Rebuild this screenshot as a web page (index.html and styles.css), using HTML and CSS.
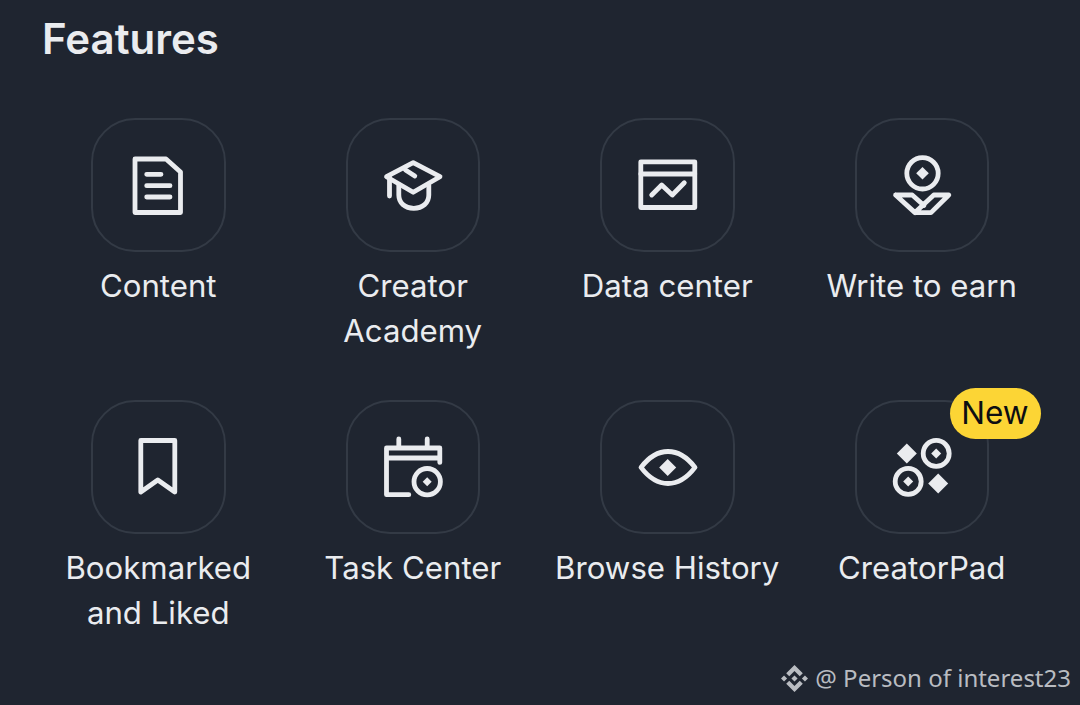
FILE: index.html
```html
<!DOCTYPE html>
<html lang="en">
<head>
    <meta charset="UTF-8">
    <meta name="viewport" content="width=device-width, initial-scale=1.0">
    <title>Features</title>
    <link rel="stylesheet" href="styles.css">
</head>
<body>

<h1 class="title">Features</h1>

<div class="features">

    <div class="feature">
        <div class="tile">
            <svg class="icon" viewBox="0 0 64 64">
                <path d="M9 6H40L54.5 19V59.5H9Z"/>
                <path d="M20.7 21.3H35M20.7 32.7H44M20.7 44H44"/>
            </svg>
        </div>
        <p class="label">Content</p>
    </div>

    <div class="feature">
        <div class="tile">
            <svg class="icon" viewBox="0 0 64 64">
                <path d="M5.5 23.7L32.2 9.7L59 23.7L32.2 39.3Z"/>
                <path d="M8.5 23.7V43M17.8 32V42C17.8 50 24 55.3 32.8 55.3C41.5 55.3 47.8 50 47.8 42V32M24.5 17L33.8 23"/>
            </svg>
        </div>
        <p class="label">Creator Academy</p>
    </div>

    <div class="feature">
        <div class="tile">
            <svg class="icon" viewBox="0 0 64 64">
                <path d="M5.8 8.8H59.8V54.5H5.8Z"/>
                <path d="M5.8 21H59.8M16.7 42L26.7 32L37.3 42L49.3 29.7"/>
            </svg>
        </div>
        <p class="label">Data center</p>
    </div>

    <div class="feature">
        <div class="tile">
            <svg class="icon" viewBox="0 0 64 64">
                <circle cx="32.5" cy="20.3" r="15.7"/>
                <path class="solid" d="M32.5 14L38.8 20.3L32.5 26.6L26.2 20.3Z"/>
                <path d="M5.6 42H22.2L34 52.5M5.6 42L25 59.6M58.8 42H43.8L25 59.6H41Z"/>
            </svg>
        </div>
        <p class="label">Write to earn</p>
    </div>

    <div class="feature">
        <div class="tile">
            <svg class="icon" viewBox="0 0 64 64">
                <path d="M14.8 5.5H48.8V57L31.8 45L14.8 57Z"/>
            </svg>
        </div>
        <p class="label">Bookmarked and Liked</p>
    </div>

    <div class="feature">
        <div class="tile">
            <svg class="icon" viewBox="0 0 64 64">
                <path d="M58.8 27.4V13H5.5V59.7H27.8M5.5 23H58.8M17.8 4V13M46.2 4V13"/>
                <circle cx="46.2" cy="46.7" r="13.2"/>
                <path class="solid" d="M46.2 42.2L50.7 46.7L46.2 51.2L41.7 46.7Z"/>
            </svg>
        </div>
        <p class="label">Task Center</p>
    </div>

    <div class="feature">
        <div class="tile">
            <svg class="icon" viewBox="0 0 64 64">
                <path d="M6 32.4C14 22 22 16.5 33 16.5S52 22 60 32.4C52 43 44 48.5 33 48.5S14 43 6 32.4Z"/>
                <path class="solid" d="M32.7 23.9L41.2 32.4L32.7 40.9L24.2 32.4Z"/>
            </svg>
        </div>
        <p class="label">Browse History</p>
    </div>

    <div class="feature">
        <div class="tile">
            <svg class="icon" viewBox="0 0 64 64">
                <path class="solid" d="M16.8 8.4L26.8 18.4L16.8 28.4L6.8 18.4Z"/>
                <circle cx="46.2" cy="18.4" r="13"/>
                <path class="solid" d="M46.2 13.4L51.2 18.4L46.2 23.4L41.2 18.4Z"/>
                <circle cx="18.2" cy="46.4" r="13"/>
                <path class="solid" d="M18.2 41.4L23.2 46.4L18.2 51.4L13.2 46.4Z"/>
                <path class="solid" d="M48.2 38.4L58.2 48.4L48.2 58.4L38.2 48.4Z"/>
            </svg>
            <span class="badge">New</span>
        </div>
        <p class="label">CreatorPad</p>
    </div>

</div>

<!-- Watermark -->
<div class="watermark">
    <svg class="watermark-logo" viewBox="0 0 126.61 126.61">
        <path d="M38.73 53.2l24.59-24.58 24.6 24.6 14.3-14.31L63.32 0 24.42 38.9zM0 63.31l14.3-14.31 14.31 14.31L14.3 77.61zM38.73 73.41l24.59 24.59 24.6-24.6 14.31 14.29-38.9 38.91-38.91-38.88v-.03zM98 63.31l14.3-14.3 14.31 14.3-14.31 14.3zM77.83 63.3L63.32 48.78 48.81 63.28l14.51 14.5z"/>
    </svg>
    <span>@ Person of interest23</span>
</div>

</body>
</html>
```

FILE: styles.css
```css
body {
    font-family: Inter, 'Noto Sans', sans-serif;
    margin: 0;
    height: 705px;
    overflow: hidden;
    position: relative;
    background-color: #1f2530;
    color: #eaecef;
}
.title {
    margin: 0;
    padding: 15px 42px 0;
    font-size: 42px;
    line-height: 48px;
    font-weight: 600;
}
.features {
    display: grid;
    grid-template-columns: repeat(4, 254.5px);
    row-gap: 45.5px;
    padding: 55px 31px 0;
}
.feature {
    display: flex;
    flex-direction: column;
    align-items: center;
}
.tile {
    position: relative;
    display: flex;
    align-items: center;
    justify-content: center;
    box-sizing: border-box;
    width: 134.5px;
    height: 134px;
    border: 2px solid #333a45;
    border-radius: 44px;
}
.icon {
    width: 64px;
    height: 64px;
    fill: none;
    stroke: #eaecef;
    stroke-width: 4.8;
    stroke-linecap: round;
    stroke-linejoin: round;
}
.icon .solid {
    fill: #eaecef;
    stroke: none;
}
.label {
    margin: 12px 0 0;
    width: 240px;
    min-height: 90px;
    font-size: 31.2px;
    line-height: 45px;
    text-align: center;
}
.badge {
    position: absolute;
    left: 93px;
    top: -13.5px;
    width: 91px;
    height: 51px;
    border-radius: 26px;
    background-color: #fcd535;
    color: #0d0e12;
    font-size: 31.5px;
    line-height: 50px;
    text-align: center;
}
.watermark {
    position: absolute;
    right: 9px;
    top: 663px;
    display: flex;
    align-items: center;
    gap: 7px;
    font-family: 'Noto Sans', sans-serif;
    font-size: 24px;
    line-height: 30px;
    color: #b9bcc1;
}
.watermark-logo {
    width: 27px;
    height: 27px;
    fill: #b9bcc1;
}
```
